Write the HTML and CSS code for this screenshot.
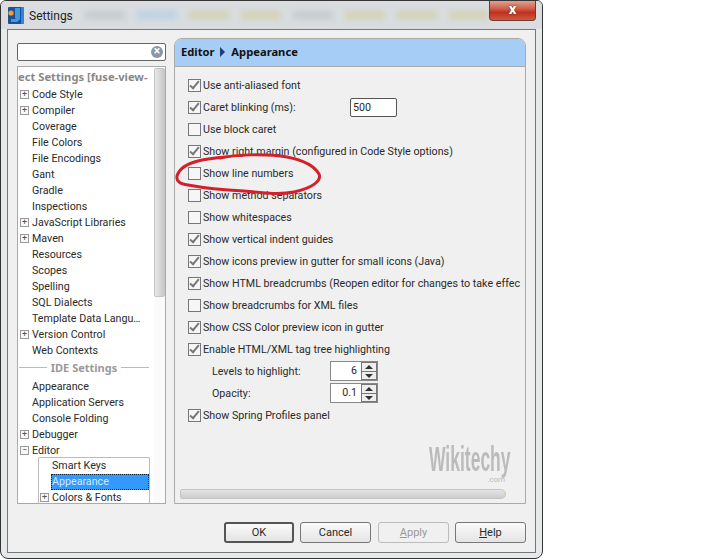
FILE: index.html
```html
<!DOCTYPE html>
<html lang="en">
<head>
    <meta charset="UTF-8">
    <title>Settings</title>
    <link rel="stylesheet" href="styles.css">
</head>
<body>

<div class="window">
    <div class="titlebar">
        <svg class="app-icon" width="17" height="17" viewBox="0 0 17 17">
            <rect x="0" y="0" width="16" height="17" rx="1" fill="#1e4f96"/>
            <path d="M7 1h5v11l-3 3h-6v-3h5l-1-1z" fill="#3f9be0"/>
            <rect x="13" y="0" width="3" height="17" fill="#2f86d8"/>
            <circle cx="3" cy="6" r="2.6" fill="#f0a030"/>
        </svg>
        <span class="title">Settings</span>
        <div class="title-blur">
            <span class="blob"></span><span class="blob blue"></span><span class="blob tan"></span><span class="blob tan"></span>
            <span class="blob"></span><span class="blob tan"></span><span class="blob tan"></span><span class="blob tan"></span>
        </div>
        <div class="close-btn">x</div>
    </div>

    <div class="client">
        <div class="main">
            <!-- left side: search + tree -->
            <div class="sidebar">
                <div class="search">
                    <span class="search-clear">×</span>
                </div>
                <div class="tree">
                    <div class="tree-scroll"><div class="tree-thumb"></div></div>
                    <div class="tree-head">ect Settings [fuse-view-</div>
                    <div class="node"><span class="plus">+</span>Code Style</div>
                    <div class="node"><span class="plus">+</span>Compiler</div>
                    <div class="node">Coverage</div>
                    <div class="node">File Colors</div>
                    <div class="node">File Encodings</div>
                    <div class="node">Gant</div>
                    <div class="node">Gradle</div>
                    <div class="node">Inspections</div>
                    <div class="node"><span class="plus">+</span>JavaScript Libraries</div>
                    <div class="node"><span class="plus">+</span>Maven</div>
                    <div class="node">Resources</div>
                    <div class="node">Scopes</div>
                    <div class="node">Spelling</div>
                    <div class="node">SQL Dialects</div>
                    <div class="node">Template Data Langu…</div>
                    <div class="node"><span class="plus">+</span>Version Control</div>
                    <div class="node">Web Contexts</div>
                    <div class="tree-sep"><span>IDE Settings</span></div>
                    <div class="node">Appearance</div>
                    <div class="node">Application Servers</div>
                    <div class="node">Console Folding</div>
                    <div class="node"><span class="plus">+</span>Debugger</div>
                    <div class="node"><span class="plus">−</span>Editor</div>
                    <div class="subtree">
                        <div class="subnode">Smart Keys</div>
                        <div class="subnode selected">Appearance</div>
                        <div class="subnode"><span class="plus">+</span>Colors &amp; Fonts</div>
                    </div>
                </div>
            </div>

            <!-- right side: options -->
            <div class="panel">
                <div class="panel-head">Editor <span class="crumb-arrow"></span> Appearance</div>
                <div class="options">
                    <div class="opt"><span class="check on"></span>Use anti-aliased font</div>
                    <div class="opt"><span class="check on"></span><span class="opt-label">Caret blinking (ms):</span><span class="field">500</span></div>
                    <div class="opt"><span class="check"></span>Use block caret</div>
                    <div class="opt"><span class="check on"></span>Show right margin (configured in Code Style options)</div>
                    <div class="opt"><span class="check"></span>Show line numbers</div>
                    <div class="opt"><span class="check"></span>Show method separators</div>
                    <div class="opt"><span class="check"></span>Show whitespaces</div>
                    <div class="opt"><span class="check on"></span>Show vertical indent guides</div>
                    <div class="opt"><span class="check on"></span>Show icons preview in gutter for small icons (Java)</div>
                    <div class="opt"><span class="check on"></span>Show HTML breadcrumbs (Reopen editor for changes to take effec</div>
                    <div class="opt"><span class="check"></span>Show breadcrumbs for XML files</div>
                    <div class="opt"><span class="check on"></span>Show CSS Color preview icon in gutter</div>
                    <div class="opt"><span class="check on"></span>Enable HTML/XML tag tree highlighting</div>
                    <div class="opt sub"><span class="sub-label">Levels to highlight:</span><span class="spinner"><span class="spin-val">6</span><span class="spin-btns"><i class="up"></i><i class="down"></i></span></span></div>
                    <div class="opt sub"><span class="sub-label">Opacity:</span><span class="spinner"><span class="spin-val">0.1</span><span class="spin-btns"><i class="up"></i><i class="down"></i></span></span></div>
                    <div class="opt"><span class="check on"></span>Show Spring Profiles panel</div>
                </div>
                <div class="hscroll"><div class="hthumb"></div></div>
            </div>
        </div>

        <div class="buttons">
            <div class="btn default">OK</div>
            <div class="btn cancel">Cancel</div>
            <div class="btn disabled"><u>A</u>pply</div>
            <div class="btn"><u>H</u>elp</div>
        </div>
    </div>
</div>

<!-- red marker scribble and watermark sit on top of the screenshot -->
<svg class="scribble" width="156" height="50" viewBox="0 0 156 50">
    <path d="M46 8 C60 5 90 3 113 7 C128 10 140 15 145 24 C148 31 138 38 120 42 C105 45 90 43 70 41 C50 40 30 38 14 35 C6 34 2 31 3 26 C5 19 12 14 24 11 C32 9 40 8 52 7" fill="none" stroke="#d4202c" stroke-width="3" stroke-linecap="round"/>
</svg>
<div class="watermark">
    <div class="wm-name">Wikitechy</div>
    <div class="wm-com">.com</div>
</div>

</body>
</html>
```

FILE: styles.css
```css
html, body {
    margin: 0;
    padding: 0;
    background-color: white;
}
body {
    width: 728px;
    height: 560px;
    overflow: hidden;
    position: relative;
    font-family: Roboto, Arial, sans-serif;
    font-size: 10.7px;
    color: #2a2a2a;
}
.window {
    width: 543px;
    height: 559px;
    box-sizing: border-box;
    background-color: #e6eaeb;
    border: 1px solid #333;
    border-radius: 6px 6px 8px 8px;
    padding: 0 6px 5px 6px;
    display: flex;
    flex-direction: column;
    overflow: hidden;
}
.titlebar {
    height: 28px;
    flex: none;
    display: flex;
    align-items: center;
    position: relative;
    background-color: #d9dde0;
    margin: 0 -6px;
    padding: 0 6px;
}
.app-icon {
    margin-left: 1px;
    margin-top: 1px;
}
.title {
    margin-left: 4px;
    font-size: 12px;
    color: #222;
    margin-top: 2px;
}
.title-blur {
    display: flex;
    gap: 12px;
    margin-left: 12px;
    filter: blur(3px);
}
.blob {
    width: 40px;
    height: 8px;
    background-color: #c4cacd;
}
.blob.blue {
    background-color: #b9d0e2;
}
.blob.tan {
    background-color: #d3d0b2;
}
.close-btn {
    position: absolute;
    right: 6px;
    top: 0;
    width: 45px;
    height: 19px;
    background: linear-gradient(#e0a090, #d0604c 40%, #c03020 60%, #cf5a40);
    border: 1px solid #6e3a30;
    border-top: none;
    border-radius: 0 0 4px 4px;
    color: white;
    font-weight: bold;
    font-size: 15px;
    text-align: center;
    line-height: 16px;
    text-shadow: 0 0 2px #432;
}
.client {
    flex: 1;
    background-color: #f0f0f0;
    border: 1px solid #777;
    padding: 8px 9px 0 9px;
    display: flex;
    flex-direction: column;
}
.main {
    display: flex;
    gap: 8px;
    height: 466px;
}
.sidebar {
    width: 149px;
    display: flex;
    flex-direction: column;
    gap: 5px;
    padding-top: 5px;
}
.search {
    height: 16px;
    flex: none;
    background-color: white;
    border: 1px solid #666;
    border-radius: 2px;
    display: flex;
    justify-content: flex-end;
    align-items: center;
    padding-right: 2px;
}
.search-clear {
    width: 12px;
    height: 12px;
    border-radius: 50%;
    background-color: #8a96a6;
    color: white;
    font-size: 12px;
    font-weight: bold;
    line-height: 11px;
    text-align: center;
}
.tree {
    flex: 1;
    background-color: white;
    border: 1px solid #aaa;
    overflow: hidden;
    position: relative;
    padding-top: 2px;
}
.tree-scroll {
    position: absolute;
    right: 0;
    top: 0;
    bottom: 0;
    width: 11px;
    background-color: #fafafa;
}
.tree-thumb {
    height: 227px;
    margin-top: 1px;
    width: 9px;
    background: linear-gradient(to right, #e8e8e8, #c8c8c8);
    border: 1px solid #c4c4c4;
    border-radius: 2px;
}
.tree-head {
    height: 18px;
    line-height: 16px;
    font-family: "Noto Sans", Arial, sans-serif;
    font-weight: bold;
    color: #888;
    font-size: 11.2px;
    white-space: nowrap;
    overflow: hidden;
}
.node {
    height: 16px;
    line-height: 16px;
    padding-left: 14px;
    position: relative;
    white-space: nowrap;
}
.plus {
    position: absolute;
    left: 2px;
    top: 3px;
    width: 7px;
    height: 7px;
    line-height: 6px;
    border: 1px solid #999;
    font-size: 9px;
    text-align: center;
    color: #555;
    background-color: #f8f8f8;
}
.tree-sep {
    height: 20px;
    box-sizing: border-box;
    padding: 0 16px 3px 1px;
    display: flex;
    align-items: center;
    gap: 4px;
    font-family: "Noto Sans", Arial, sans-serif;
    font-weight: bold;
    color: #999;
    font-size: 11px;
}
.tree-sep::before, .tree-sep::after {
    content: "";
    flex: 1;
    height: 1px;
    background-color: #bbb;
}
.subtree {
    margin-left: 20px;
    margin-top: -2px;
    border: 1px solid #bbb;
    border-bottom: none;
    border-radius: 2px 2px 0 0;
    padding-left: 12px;
    box-sizing: border-box;
    width: 112px;
}
.subnode {
    height: 16px;
    line-height: 16px;
    padding-left: 1px;
    position: relative;
}
.subnode .plus {
    left: -11px;
}
.subnode.selected {
    background-color: #3399ff;
    color: #d4ebff;
    outline: 1px dotted #123;
    outline-offset: -1px;
}
.panel {
    width: 352px;
    display: flex;
    flex-direction: column;
    border: 1px solid #aaa;
    border-radius: 8px 8px 0 0;
    box-sizing: border-box;
}
.panel-head {
    height: 28px;
    flex: none;
    box-sizing: border-box;
    background-color: #a6cdf5;
    border-bottom: 1px solid #aaa;
    border-radius: 7px 7px 0 0;
    font-family: "Noto Sans", Arial, sans-serif;
    font-weight: bold;
    font-size: 11.2px;
    color: #111;
    padding-left: 6px;
    line-height: 26px;
}
.crumb-arrow {
    display: inline-block;
    border-left: 5px solid #1c3f78;
    border-top: 5px solid transparent;
    border-bottom: 5px solid transparent;
    margin: 0 3px;
    vertical-align: -1px;
}
.options {
    flex: 1;
    padding: 7px 0 0 13px;
    overflow: hidden;
}
.opt {
    height: 22px;
    display: flex;
    align-items: center;
    white-space: nowrap;
}
.opt.sub {
    padding-left: 24px;
}
.check {
    width: 11px;
    height: 11px;
    border: 1px solid #777;
    background-color: #f6f6f6;
    margin-right: 2px;
    flex: none;
    position: relative;
}
.check.on::after {
    content: "";
    position: absolute;
    left: 3px;
    top: -1px;
    width: 3px;
    height: 8px;
    border-right: 2px solid #777;
    border-bottom: 2px solid #777;
    transform: rotate(40deg);
}
.opt-label {
    width: 147px;
}
.field {
    width: 43px;
    height: 17px;
    line-height: 17px;
    background-color: white;
    border: 1px solid #555;
    border-radius: 2px;
    padding-left: 2px;
}
.sub-label {
    width: 118px;
}
.spinner {
    width: 46px;
    height: 18px;
    display: flex;
    background-color: white;
    border: 1px solid #888;
}
.spin-val {
    flex: 1;
    text-align: right;
    padding-right: 4px;
    line-height: 18px;
}
.spin-btns {
    width: 14px;
    display: flex;
    flex-direction: column;
    gap: 1px;
    border: 1px solid #777;
    background-color: #777;
}
.spin-btns i {
    flex: 1;
    background-color: #eee;
    position: relative;
}
.spin-btns i::after {
    content: "";
    position: absolute;
    left: 3px;
    top: 2px;
    border-left: 4px solid transparent;
    border-right: 4px solid transparent;
}
.spin-btns .up::after {
    border-bottom: 4px solid #333;
}
.spin-btns .down::after {
    border-top: 4px solid #333;
}
.hscroll {
    height: 10px;
    flex: none;
    margin: 0 0 4px 0;
    padding: 0 19px 0 5px;
}
.hthumb {
    height: 8px;
    background: linear-gradient(#e4e4e4, #cdcdcd);
    border: 1px solid #c4c4c4;
    border-radius: 2px 5px 5px 2px;
}
.buttons {
    display: flex;
    justify-content: flex-end;
    gap: 6px;
    margin-top: 18px;
}
.btn {
    width: 69px;
    height: 19px;
    line-height: 19px;
    text-align: center;
    background: linear-gradient(#fafafa, #e4e4e4);
    border: 1px solid #777;
    border-radius: 3px;
    font-size: 11px;
}
.btn.cancel {
    margin-right: 1px;
}
.btn.default {
    border: 2px solid #555;
    height: 17px;
    line-height: 17px;
    width: 66px;
}
.btn.disabled {
    color: #999;
    border-color: #bbb;
    background: #f0f0f0;
}
.scribble {
    position: absolute;
    left: 174px;
    top: 150px;
}
.watermark {
    position: absolute;
    left: 429px;
    top: 440px;
    width: 84px;
    color: #bbb;
    text-align: right;
}
.wm-name {
    font-family: "Liberation Sans", sans-serif;
    font-weight: bold;
    font-size: 35px;
    line-height: 38px;
    transform: scaleX(0.5);
    transform-origin: left;
    white-space: nowrap;
    text-align: left;
}
.wm-com {
    font-size: 8px;
    line-height: 8px;
    margin-top: -2px;
    padding-right: 8px;
}
```
